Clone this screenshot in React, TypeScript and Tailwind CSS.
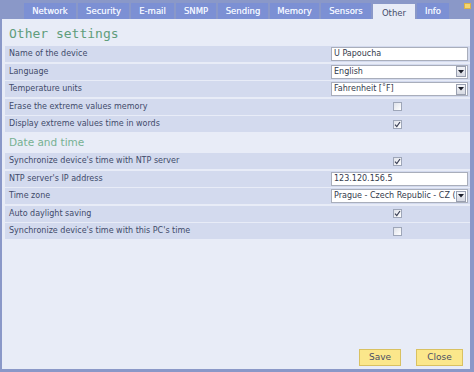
import React from "react";

const tabs = [
  { label: "Network", w: "w-[52px]" },
  { label: "Security", w: "w-[51px]" },
  { label: "E-mail", w: "w-[43px]" },
  { label: "SNMP", w: "w-[40px]" },
  { label: "Sending", w: "w-[50px]" },
  { label: "Memory", w: "w-[49px]" },
  { label: "Sensors", w: "w-[50px]" },
  { label: "Other", w: "w-[42px]", active: true },
  { label: "Info", w: "w-[32px]" },
];

type Control =
  | { kind: "input"; value: string }
  | { kind: "select"; value: string }
  | { kind: "check"; checked: boolean };

const general: { label: string; control: Control }[] = [
  { label: "Name of the device", control: { kind: "input", value: "U Papoucha" } },
  { label: "Language", control: { kind: "select", value: "English" } },
  { label: "Temperature units", control: { kind: "select", value: "Fahrenheit [˚F]" } },
  { label: "Erase the extreme values memory", control: { kind: "check", checked: false } },
  { label: "Display extreme values time in words", control: { kind: "check", checked: true } },
];

const dateTime: { label: string; control: Control }[] = [
  { label: "Synchronize device's time with NTP server", control: { kind: "check", checked: true } },
  { label: "NTP server's IP address", control: { kind: "input", value: "123.120.156.5" } },
  { label: "Time zone", control: { kind: "select", value: "Prague - Czech Republic - CZ (+1)" } },
  { label: "Auto daylight saving", control: { kind: "check", checked: true } },
  { label: "Synchronize device's time with this PC's time", control: { kind: "check", checked: false } },
];

function Checkbox({ checked }: { checked: boolean }) {
  return (
    <div className="ml-[62px] flex h-[9px] w-[9px] items-center justify-center border border-[#9ea6b8] bg-gradient-to-br from-[#dfe2ea] to-[#ffffff]">
      {checked && (
        <svg width="7" height="7" viewBox="0 0 7 7">
          <path d="M1 3.6 L2.8 5.6 L6 1" fill="none" stroke="#3a3f55" strokeWidth="1.2" />
        </svg>
      )}
    </div>
  );
}

function Field({ control }: { control: Control }) {
  if (control.kind === "check") return <Checkbox checked={control.checked} />;
  if (control.kind === "input") {
    return (
      <div className="flex h-[14px] w-[137px] items-center overflow-hidden border border-[#a9aebb] bg-white pl-[2px] text-[8px] text-[#333a4c]">
        {control.value}
      </div>
    );
  }
  return (
    <div className="flex h-[14px] w-[137px] items-center border border-[#a9aebb] bg-white text-[8px] text-[#333a4c]">
      <div className="flex-1 overflow-hidden whitespace-nowrap pl-[2px]">{control.value}</div>
      <div className="mr-[1px] flex h-[11px] w-[10px] shrink-0 items-center justify-center border border-[#9aa0b0] bg-gradient-to-b from-[#f4f5f8] to-[#d6d9e2]">
        <svg width="6" height="4" viewBox="0 0 6 4">
          <path d="M0 0 H6 L3 3.5 Z" fill="#1c1f2a" />
        </svg>
      </div>
    </div>
  );
}

function Row({ label, control }: { label: string; control: Control }) {
  return (
    <div className="flex h-[16px] items-center bg-[#d3daee]">
      <div className="w-[326px] pl-[4px] text-[8px] text-[#414a6a]">{label}</div>
      <Field control={control} />
    </div>
  );
}

export default function App() {
  return (
    <div
      className="flex h-[372px] w-[474px] flex-col overflow-hidden bg-[#8a98c8]"
      style={{ fontFamily: '"DejaVu Sans", Verdana, sans-serif' }}
    >
      <div className="relative flex h-[19px] items-end gap-[2px] pl-[24px]">
        {tabs.map((t) =>
          t.active ? (
            <div
              key={t.label}
              className={`${t.w} flex h-[15px] items-center justify-center bg-[#e8ecf7] pt-[3px] text-[8.5px] text-[#454d6b]`}
            >
              {t.label}
            </div>
          ) : (
            <div
              key={t.label}
              className={`${t.w} flex h-[16px] items-center justify-center bg-[#7c90d4] text-[8.5px] text-[#eef2ff] [text-shadow:0_0_0.4px_#eef2ff]`}
            >
              {t.label}
            </div>
          )
        )}
        <div className="absolute right-[3px] top-[3px] h-[6px] w-[7px] border border-[#d8b24a] bg-[#f4d66e]" />
      </div>

      <div className="mb-[3px] ml-[2px] mr-[4px] flex flex-1 flex-col bg-[#e8ecf7]">
        <div
          className="flex h-[27px] items-center pl-[7px] pt-[3px] text-[13px] text-[#5f9d7b]"
          style={{ fontFamily: '"DejaVu Sans Mono", monospace' }}
        >
          Other settings
        </div>
        <div className="flex flex-col gap-[1.5px] pl-[3px]">
          {general.map((r) => (
            <Row key={r.label} label={r.label} control={r.control} />
          ))}
          <div className="flex h-[18px] items-center pl-[4px] pt-[1px] text-[10.5px] text-[#77b193]">
            Date and time
          </div>
          {dateTime.map((r) => (
            <Row key={r.label} label={r.label} control={r.control} />
          ))}
        </div>

        <div className="mt-auto flex justify-end gap-[15px] pb-[3px] pr-[7px]">
          <button className="h-[17px] w-[42px] border border-[#d9c161] bg-[#fbe78b] text-[9px] text-[#4a4f66]">
            Save
          </button>
          <button className="h-[17px] w-[47px] border border-[#d9c161] bg-[#fbe78b] text-[9px] text-[#4a4f66]">
            Close
          </button>
        </div>
      </div>
    </div>
  );
}
